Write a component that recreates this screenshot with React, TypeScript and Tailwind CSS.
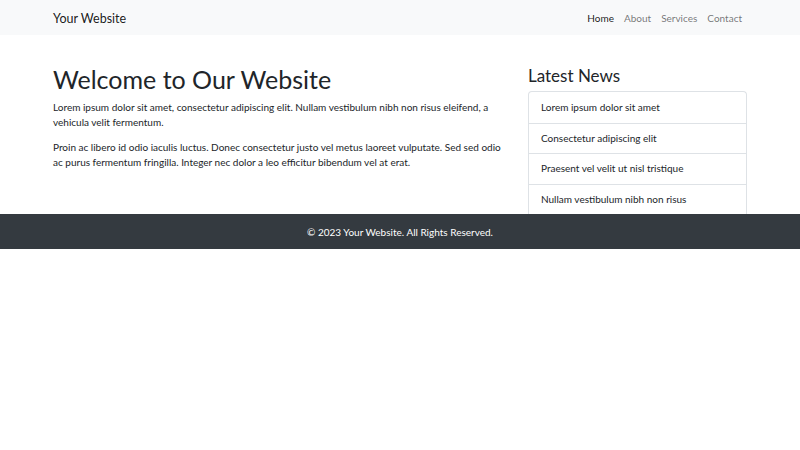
export default function App() {
  const news = [
    'Lorem ipsum dolor sit amet',
    'Consectetur adipiscing elit',
    'Praesent vel velit ut nisl tristique',
    'Nullam vestibulum nibh non risus',
  ];

  return (
    <div className="min-h-screen w-full bg-white text-[#212529] font-['Lato',sans-serif]">
      {/* navbar */}
      <nav className="h-[35px] bg-[#f8f9fa]">
        <div className="mx-auto flex h-full w-[694px] items-center justify-between pt-[2px]">
          <span className="text-[12.5px] text-black/90 mt-[1px]">Your Website</span>
          <ul className="flex gap-[10px] text-[10px] mr-[5px]">
            <li className="text-black/90">Home</li>
            <li className="text-black/55">About</li>
            <li className="text-black/55">Services</li>
            <li className="text-black/55">Contact</li>
          </ul>
        </div>
      </nav>

      {/* main */}
      <main className="mx-auto w-[694px] pt-[28px] flex gap-[25px]">
        <div className="w-[450px]">
          <h1 className="text-[25px] leading-[32px] mb-[5px]">Welcome to Our Website</h1>
          <p className="text-[10px] leading-[15px] mb-[10px]">
            Lorem ipsum dolor sit amet, consectetur adipiscing elit. Nullam vestibulum nibh non risus eleifend, a
            vehicula velit fermentum.
          </p>
          <p className="text-[10px] leading-[15px]">
            Proin ac libero id odio iaculis luctus. Donec consectetur justo vel metus laoreet vulputate. Sed sed odio
            ac purus fermentum fringilla. Integer nec dolor a leo efficitur bibendum vel at erat.
          </p>
        </div>
        <div className="flex-1">
          <h4 className="text-[17px] leading-[24px] mb-[3px] mt-[1px]">Latest News</h4>
          <ul className="border border-[#dee2e6] rounded-t-[4px] border-b-0">
            {news.map((n, i) => (
              <li
                key={n}
                className={`h-[30.5px] flex items-center px-[12px] text-[10px] ${i > 0 ? 'border-t border-[#dee2e6]' : ''}`}
              >
                {n}
              </li>
            ))}
          </ul>
        </div>
      </main>

      {/* footer */}
      <footer className="h-[35px] bg-[#343a40] text-white flex items-center justify-center text-[10px] pt-[1px]">
        © 2023 Your Website. All Rights Reserved.
      </footer>
    </div>
  );
}
